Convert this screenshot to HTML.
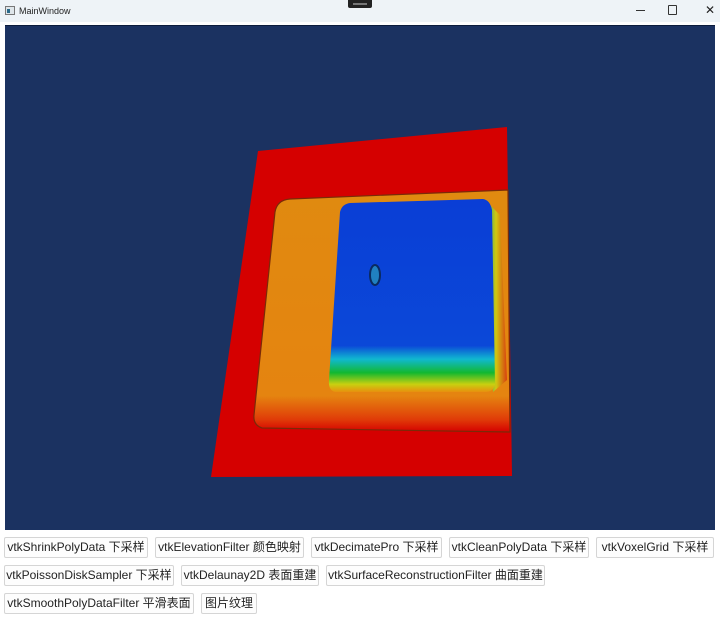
<!DOCTYPE html>
<html><head><meta charset="utf-8"><style>
body{margin:0;width:720px;height:617px;background:#fff;font-family:"Liberation Sans","Noto Sans CJK SC",sans-serif;position:relative;overflow:hidden}
.title{position:absolute;left:0;top:0;width:720px;height:22px;background:#eef3f7;font-size:9px;color:#222}
.title span{position:absolute;left:19px;top:6px}
.vp{position:absolute;left:5px;top:25px;width:710px;height:504px;background:#1b3261;border-top:1px solid #0c1c3c}
.b{position:absolute;height:21px;border:1px solid #d5d5d5;border-radius:2px;background:#fdfdfd;font-size:12px;line-height:19px;color:#222;text-align:center;box-sizing:border-box;white-space:nowrap}
</style></head><body>
<div class="title">
<svg style="position:absolute;left:5px;top:6px" width="10" height="9"><rect x="0.5" y="0.5" width="9" height="8" fill="#dfe6ea" stroke="#777"/><rect x="2" y="3" width="3" height="4" fill="#2a6a8a"/></svg>
<span>MainWindow</span>
<div style="position:absolute;left:348px;top:0;width:24px;height:8px;background:#222;border-radius:0 0 2px 2px"><div style="margin:3px 5px;height:2px;background:#777"></div></div>
<div style="position:absolute;left:636px;top:10px;width:9px;height:1px;background:#333"></div>
<div style="position:absolute;left:668px;top:5px;width:7px;height:8px;border:1px solid #333;border-radius:1px"></div>
<span style="left:705px;top:3px;font-size:12px">✕</span>
</div>
<div class="vp"></div>
<svg style="position:absolute;left:0;top:0" width="720" height="617">
<defs>
<linearGradient id="og" x1="0" y1="0" x2="0" y2="1"><stop offset="0" stop-color="#e08a10"/><stop offset="0.85" stop-color="#e58410"/><stop offset="0.95" stop-color="#e03a08"/><stop offset="1" stop-color="#d50000"/></linearGradient>
<linearGradient id="bg" x1="0" y1="0" x2="0" y2="1"><stop offset="0" stop-color="#0a3ed6"/><stop offset="0.76" stop-color="#0b48d8"/><stop offset="0.83" stop-color="#10b8d0"/><stop offset="0.9" stop-color="#12b830"/><stop offset="0.96" stop-color="#c8d010"/><stop offset="1" stop-color="#e8900e"/></linearGradient>
<linearGradient id="sg" x1="0" y1="0" x2="1" y2="0"><stop offset="0" stop-color="#10a080"/><stop offset="0.5" stop-color="#d0c810"/><stop offset="1" stop-color="#d84010"/></linearGradient>
</defs>
<polygon points="258,151 507,127 512,476 211,477" fill="#d50000"/>
<path d="M290,199 L508,190 L510,432 L262,428 Q253,425 254,415 L275,212 Q277,200 290,199Z" fill="url(#og)" stroke="#7a2a08" stroke-width="1.2"/>
<polygon points="485,200 500,215 507,380 493,392" fill="url(#sg)"/>
<path d="M350,203 L483,199 Q490,200 492,210 L495,385 Q493,392 485,392 L335,392 Q328,390 329,380 L340,212 Q342,204 350,203Z" fill="url(#bg)"/>
<ellipse cx="375" cy="275" rx="5" ry="10" fill="#2080c0" stroke="#0a2a60" stroke-width="2"/>
</svg>
<div class="b" style="left:4px;top:537px;width:144px">vtkShrinkPolyData 下采样</div>
<div class="b" style="left:155px;top:537px;width:149px">vtkElevationFilter 颜色映射</div>
<div class="b" style="left:311px;top:537px;width:131px">vtkDecimatePro 下采样</div>
<div class="b" style="left:449px;top:537px;width:140px">vtkCleanPolyData 下采样</div>
<div class="b" style="left:596px;top:537px;width:118px">vtkVoxelGrid 下采样</div>
<div class="b" style="left:4px;top:565px;width:170px">vtkPoissonDiskSampler 下采样</div>
<div class="b" style="left:181px;top:565px;width:138px">vtkDelaunay2D 表面重建</div>
<div class="b" style="left:326px;top:565px;width:219px">vtkSurfaceReconstructionFilter 曲面重建</div>
<div class="b" style="left:4px;top:593px;width:190px">vtkSmoothPolyDataFilter 平滑表面</div>
<div class="b" style="left:201px;top:593px;width:56px">图片纹理</div>
</body></html>
